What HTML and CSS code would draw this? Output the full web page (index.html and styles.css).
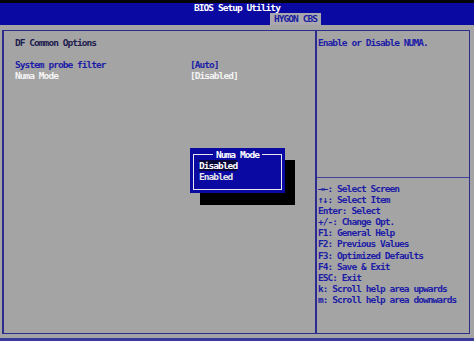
FILE: index.html
```html
<!DOCTYPE html>
<html>
<head>
<meta charset="utf-8">
<link rel="stylesheet" href="styles.css">
</head>
<body>
<div class="screen">
  <div class="topbar"></div>
  <div class="header">
    <div class="title">BIOS Setup Utility</div>
    <div class="tabs"><span class="tab">HYGON CBS</span></div>
  </div>
  <div class="main">
    <div class="frame">
      <div class="left">
        <div class="section">DF Common Options</div>
        <div class="spacer"></div>
        <div class="row"><span class="label">System probe filter</span><span class="value">[Auto]</span></div>
        <div class="row sel"><span class="label">Numa Mode</span><span class="value">[Disabled]</span></div>
      </div>
      <div class="right">
        <div class="help">Enable or Disable NUMA.</div>
        <div class="keys">
          <div>→←: Select Screen</div>
          <div>↑↓: Select Item</div>
          <div>Enter: Select</div>
          <div>+/-: Change Opt.</div>
          <div>F1: General Help</div>
          <div>F2: Previous Values</div>
          <div>F3: Optimized Defaults</div>
          <div>F4: Save &amp; Exit</div>
          <div>ESC: Exit</div>
          <div>k: Scroll help area upwards</div>
          <div>m: Scroll help area downwards</div>
        </div>
      </div>
    </div>
  </div>
  <div class="bottombar"></div>
  <div class="popup">
    <div class="pinner">
      <div class="ptitle"><span>Numa Mode</span></div>
      <div class="pitem"><span class="psel">Disabled</span></div>
      <div class="pitem">Enabled</div>
    </div>
  </div>
</div>
</body>
</html>
```
FILE: styles.css
```css
html, body {
  margin: 0;
  padding: 0;
  background: #a4a4a4;
}
.screen {
  position: relative;
  width: 474px;
  height: 341px;
  display: flex;
  flex-direction: column;
  font-family: "DejaVu Sans Mono", "Liberation Mono", monospace;
  font-weight: bold;
  font-size: 9.5px;
  letter-spacing: -0.95px;
  line-height: 11px;
  overflow: hidden;
}
.topbar {
  height: 3px;
  background: #050508;
}
.header {
  height: 22px;
  background: #0a0aa2;
  display: flex;
  flex-direction: column;
}
.title {
  height: 10px;
  line-height: 10px;
  text-align: center;
  color: #ffffff;
}
.tabs {
  padding-left: 270px;
  height: 12px;
}
.tab {
  display: inline-block;
  width: 51px;
  height: 12px;
  line-height: 12px;
  background: #a8a8ae;
  color: #1a1aa0;
  text-align: center;
}
.main {
  flex: 1;
  background: #a4a4a4;
  padding: 5px 4px 4px 2px;
  display: flex;
}
.frame {
  flex: 1;
  border: 1px solid #2c2c8c;
  border-left-width: 2px;
  display: flex;
}
.left {
  width: 300px;
  border-right: 2px solid #2a2a90;
  padding: 6px 0 0 11px;
}
.section {
  color: #1c1c4e;
}
.spacer {
  height: 11px;
}
.row {
  display: flex;
  color: #1c1ca6;
}
.row.sel {
  color: #f4f4f4;
}
.label {
  width: 175px;
}
.right {
  flex: 1;
  display: flex;
  flex-direction: column;
}
.help {
  height: 140px;
  padding: 6px 0 0 1px;
  color: #1c1ca6;
  border-bottom: 1px solid #40409a;
}
.keys {
  padding: 5px 0 0 1px;
  color: #1c1ca6;
  line-height: 11.1px;
}
.bottombar {
  height: 3px;
  background: #3a3a9a;
}
.popup {
  position: absolute;
  left: 190px;
  top: 148px;
  width: 95px;
  height: 45px;
  box-sizing: border-box;
  background: #0a0aa2;
  box-shadow: 10px 12px 0 #000000;
  padding: 6px 3px 3px 3px;
  display: flex;
}
.pinner {
  flex: 1;
  border: 1px solid #e8e8f0;
  padding: 0 5px;
}
.ptitle {
  margin-top: -6px;
  text-align: center;
  color: #ffffff;
}
.ptitle span {
  background: #0a0aa2;
  padding: 0 3px;
}
.pitem {
  color: #e6e6e6;
}
.psel {
  color: #ffffff;
  background: #06063a;
}
```
